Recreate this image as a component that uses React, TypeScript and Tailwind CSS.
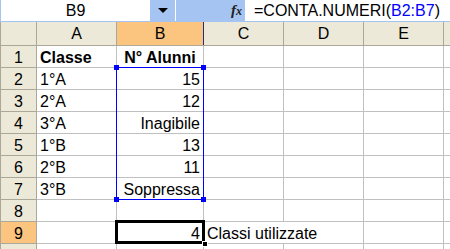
import React from 'react';

const cols = [
  { key: 'A', w: 'w-[80px]' },
  { key: 'B', w: 'w-[87px]' },
  { key: 'C', w: 'w-[80px]' },
  { key: 'D', w: 'w-[80px]' },
  { key: 'E', w: 'w-[80px]' },
];

type Row = { n: number; a?: string; b?: string; bold?: boolean; c?: string };

const rows: Row[] = [
  { n: 1, a: 'Classe', b: 'N° Alunni', bold: true },
  { n: 2, a: '1°A', b: '15' },
  { n: 3, a: '2°A', b: '12' },
  { n: 4, a: '3°A', b: 'Inagibile' },
  { n: 5, a: '1°B', b: '13' },
  { n: 6, a: '2°B', b: '11' },
  { n: 7, a: '3°B', b: 'Soppressa' },
  { n: 8 },
  { n: 9, b: '4', c: 'Classi utilizzate' },
  { n: 10 },
];

const Handle = ({ className }: { className: string }) => (
  <div className={`absolute h-[5px] w-[5px] bg-[#0000ff] ${className}`} />
);

export default function App() {
  return (
    <div className="h-[249px] w-[450px] overflow-hidden bg-white font-['Liberation_Sans',Arial,sans-serif] text-[16px] text-black">
      {/* formula bar */}
      <div className="flex h-[22px] bg-[#a6c4f2] pl-px">
        <div className="flex h-[21px] w-[149px] items-center justify-center bg-white leading-[18px]">B9</div>
        <div className="flex h-[21px] w-[25px] items-center justify-center">
          <div className="h-0 w-0 border-x-[5px] border-t-[5px] border-x-transparent border-t-black" />
        </div>
        <div className="h-[21px] w-px bg-white" />
        <div className="flex h-[21px] w-[69px] items-center justify-end pr-[3px]">
          <span className="font-['Liberation_Serif',serif] text-[15px] font-bold italic leading-none text-[#202020]">
            f<span className="text-[12px]">x</span>
          </span>
        </div>
        <div className="flex h-[21px] flex-1 items-center bg-white pl-[9px] leading-[18px] whitespace-nowrap">
          =CONTA.NUMERI(<span className="text-[#0000ff]">B2:B7</span>)
        </div>
      </div>

      {/* sheet */}
      <div className="relative">
        {/* column headers */}
        <div className="flex h-[24px] border-b border-l border-[#aca899] bg-[#ece9d8]">
          <div className="w-[36px] border-r border-[#aca899]" />
          {cols.map((c) => (
            <div
              key={c.key}
              className={`${c.w} flex items-center justify-center border-r leading-[18px] ${
                c.key === 'B' ? 'border-r-[#1c2f86] bg-[#fcc57f]' : 'border-[#aca899]'
              }`}
            >
              {c.key}
            </div>
          ))}
          <div className="flex-1" />
        </div>

        {rows.map((r) => (
          <div key={r.n} className="flex h-[22px]">
            <div
              className={`flex w-[37px] items-end justify-center border-b border-l border-r border-[#aca899] leading-[18px] ${
                r.n === 9 ? 'bg-[#fcc57f]' : 'bg-[#ece9d8]'
              }`}
            >
              {r.n < 10 ? r.n : null}
            </div>
            <div className={`flex w-[80px] items-end border-b border-r border-[#c0c0c0] pl-[3px] leading-[18px] whitespace-nowrap ${r.bold ? 'font-bold' : ''}`}>
              {r.a}
            </div>
            <div
              className={`flex w-[87px] items-end border-b border-r border-[#c0c0c0] leading-[18px] whitespace-nowrap ${
                r.bold ? 'justify-center font-bold' : 'justify-end pr-[3px]'
              }`}
            >
              {r.b}
            </div>
            <div
              className={`relative flex w-[80px] items-end border-b border-[#c0c0c0] pl-[3px] leading-[18px] whitespace-nowrap ${
                r.c ? '' : 'border-r'
              }`}
            >
              {r.c}
            </div>
            <div className="w-[80px] border-b border-r border-[#c0c0c0]" />
            <div className="w-[80px] border-b border-r border-[#c0c0c0]" />
            <div className="flex-1 border-b border-[#c0c0c0]" />
          </div>
        ))}

        {/* reference range B2:B7 */}
        <div className="absolute left-[116px] top-[45px] h-[133px] w-[88px] border border-[#0000ff]" />
        <Handle className="left-[114px] top-[43px]" />
        <Handle className="left-[201px] top-[43px]" />
        <Handle className="left-[114px] top-[175px]" />
        <Handle className="left-[201px] top-[175px]" />

        {/* active cell B9 */}
        <div className="absolute left-[115px] top-[198px] h-[24px] w-[90px] border-[3px] border-black" />
        <div className="absolute left-[202px] top-[219px] h-[6px] w-[6px] border border-white bg-black" />
      </div>
    </div>
  );
}
